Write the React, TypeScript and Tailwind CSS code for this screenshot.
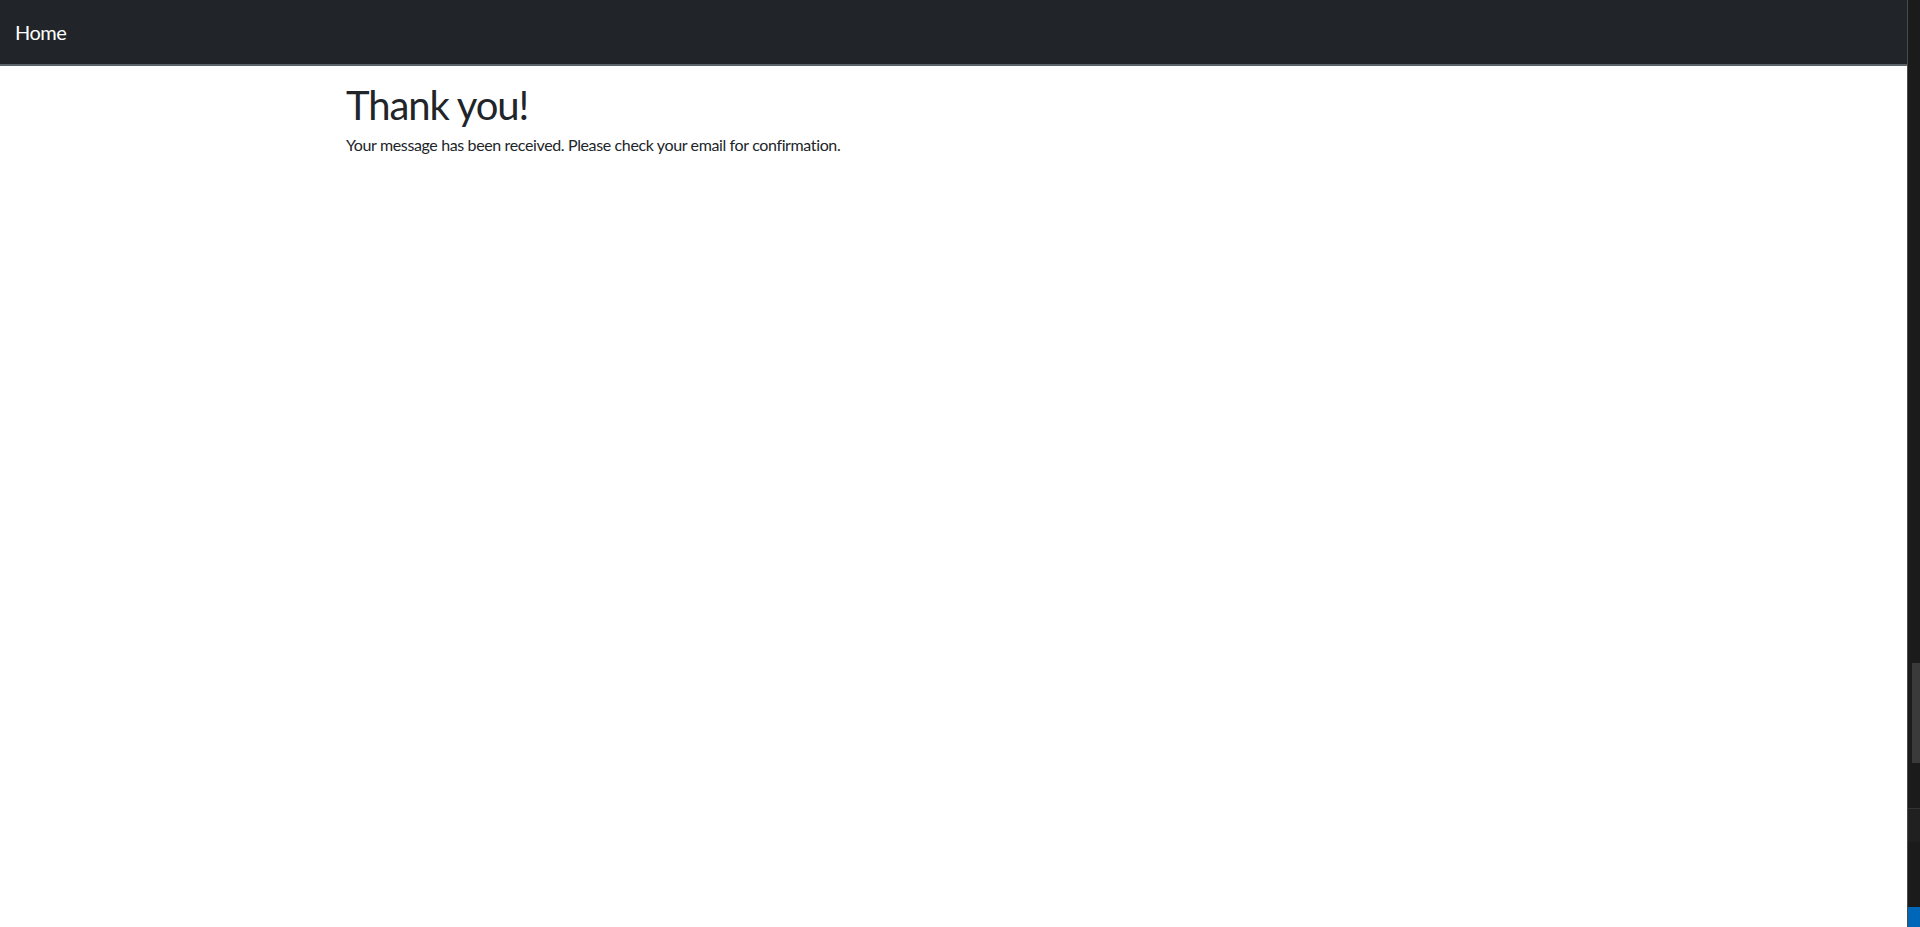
export default function App() {
  return (
    <div className="flex h-[927px] w-full overflow-hidden bg-white font-['Lato',sans-serif] text-[#212529]">
      <div className="flex min-w-0 flex-1 flex-col">
        <nav className="flex h-[66px] shrink-0 items-center border-b-2 border-[#5c636a] bg-[#212529] px-[15px]">
          <a href="#" className="text-[20px] tracking-[-0.5px] text-white">
            Home
          </a>
        </nav>
        <main className="mx-auto w-full max-w-[1215px] pt-[15px]">
          <h1 className="text-[40px] leading-[1.2] font-normal tracking-[-1.1px]">Thank you!</h1>
          <p className="mt-[4px] text-[16px] leading-[1.5] tracking-[-0.37px]">
            Your message has been received. Please check your email for confirmation.
          </p>
        </main>
      </div>
      <aside className="flex w-[13px] shrink-0 flex-col border-l border-[#4a4a4a] bg-[#1b1b1b]">
        <div className="h-[663px]" />
        <div className="ml-[4px] h-[100px] bg-[#3a3a3a]" />
        <div className="h-[45px]" />
        <div className="h-[34px] border-t border-[#333333] bg-[#202020]" />
        <div className="flex-1" />
        <div className="h-[20px] bg-[#0066b8]" />
      </aside>
    </div>
  );
}
